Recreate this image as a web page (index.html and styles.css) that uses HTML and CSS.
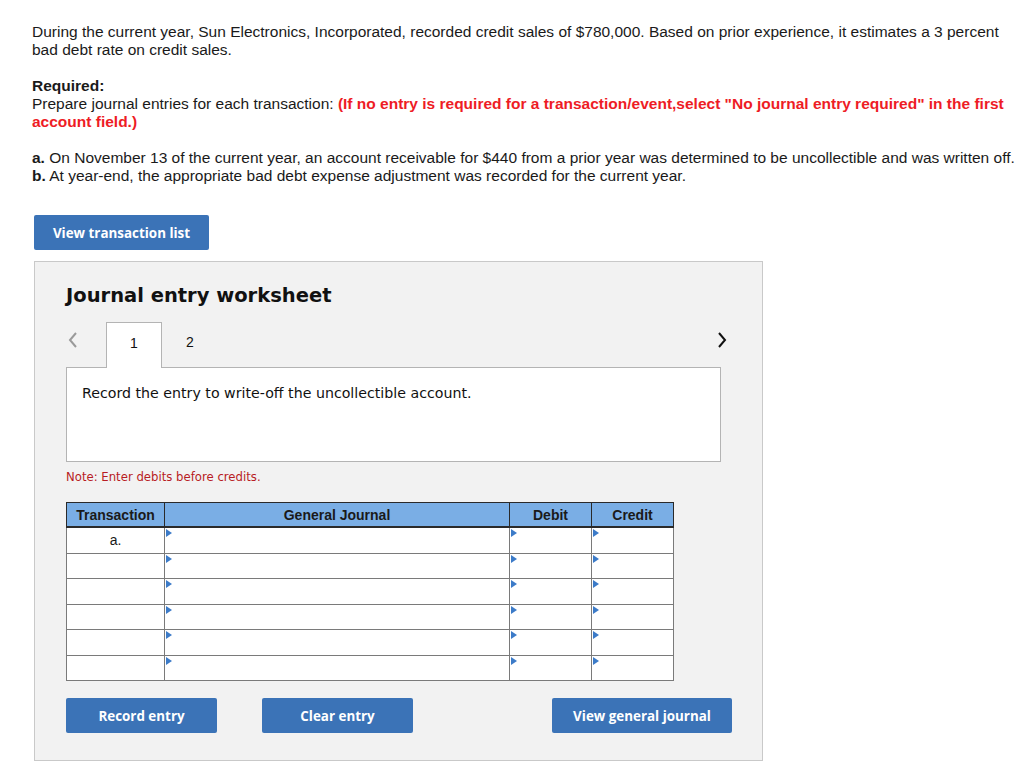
FILE: index.html
```html
<!DOCTYPE html>
<html>
<head>
<meta charset="utf-8">
<link rel="stylesheet" href="styles.css">
</head>
<body>
<div class="page">
  <p class="para">During the current year, Sun Electronics, Incorporated, recorded credit sales of $780,000. Based on prior experience, it estimates a 3 percent bad debt rate on credit sales.</p>
  <p class="para"><strong>Required:</strong><br>Prepare journal entries for each transaction: <strong class="red">(If no entry is required for a transaction/event,select "No journal entry required" in the first account field.)</strong></p>
  <p class="para para-last"><strong>a.</strong> On November 13 of the current year, an account receivable for $440 from a prior year was determined to be uncollectible and was written off.<br><strong>b.</strong> At year-end, the appropriate bad debt expense adjustment was recorded for the current year.</p>

  <button class="btn btn-list">View transaction list</button>

  <section class="panel">
    <h2 class="panel-title">Journal entry worksheet</h2>
    <div class="tabs">
      <span class="chev chev-left"><svg width="12" height="18" viewBox="0 0 12 18"><polyline points="9,2 3,9 9,16" fill="none" stroke="#9a9a9a" stroke-width="2"/></svg></span>
      <span class="tab tab-active">1</span>
      <span class="tab">2</span>
      <span class="tab-spacer"></span>
      <span class="chev chev-right"><svg width="12" height="18" viewBox="0 0 12 18"><polyline points="3,2 9,9 3,16" fill="none" stroke="#111" stroke-width="2"/></svg></span>
    </div>
    <div class="prompt">Record the entry to write-off the uncollectible account.</div>
    <div class="note">Note: Enter debits before credits.</div>
    <table class="journal">
      <thead>
        <tr><th class="c-tr">Transaction</th><th class="c-gj">General Journal</th><th class="c-dr">Debit</th><th class="c-cr">Credit</th></tr>
      </thead>
      <tbody>
        <tr><td class="c-tr">a.</td><td class="mark"></td><td class="mark"></td><td class="mark"></td></tr>
        <tr><td class="c-tr"></td><td class="mark"></td><td class="mark"></td><td class="mark"></td></tr>
        <tr><td class="c-tr"></td><td class="mark"></td><td class="mark"></td><td class="mark"></td></tr>
        <tr><td class="c-tr"></td><td class="mark"></td><td class="mark"></td><td class="mark"></td></tr>
        <tr><td class="c-tr"></td><td class="mark"></td><td class="mark"></td><td class="mark"></td></tr>
        <tr><td class="c-tr"></td><td class="mark"></td><td class="mark"></td><td class="mark"></td></tr>
      </tbody>
    </table>
    <div class="actions">
      <button class="btn btn-record">Record entry</button>
      <button class="btn btn-clear">Clear entry</button>
      <span class="actions-spacer"></span>
      <button class="btn btn-view">View general journal</button>
    </div>
  </section>
</div>
</body>
</html>
```

FILE: styles.css
```css
html, body {
  margin: 0;
  padding: 0;
  background: #ffffff;
}
.page {
  padding: 23px 0 0 32px;
  font-family: "Liberation Sans", Arial, sans-serif;
  font-size: 15.5px;
  line-height: 18px;
  color: #1a1a1a;
}
.para {
  margin: 0 0 18px 0;
  width: 990px;
}
.para-last {
  margin-bottom: 30px;
}
.red {
  color: #ee1c25;
}
.btn {
  display: block;
  border: none;
  border-radius: 2px;
  background: #3b73b7;
  color: #ffffff;
  font-family: "Open Sans", "DejaVu Sans", sans-serif;
  font-weight: 700;
  font-size: 13.4px;
  height: 35px;
  padding: 0;
  cursor: pointer;
}
.btn-list {
  margin-left: 2px;
  width: 175px;
}
.panel {
  margin: 11px 0 0 2px;
  width: 729px;
  box-sizing: border-box;
  background: #f2f2f2;
  border: 1px solid #c9c9c9;
  padding: 22px 0 27px 31px;
}
.panel-title {
  margin: 0;
  font-family: "DejaVu Sans", Verdana, sans-serif;
  font-weight: 700;
  font-size: 19.5px;
  line-height: 24px;
  color: #111;
}
.tabs {
  display: flex;
  align-items: stretch;
  margin-top: 14px;
  height: 45px;
  width: 664px;
}
.chev {
  display: flex;
  align-items: center;
  height: 36px;
}
.chev-left {
  width: 40px;
  padding-left: 1px;
  box-sizing: border-box;
}
.chev-right {
  width: 14px;
}
.tab {
  width: 56px;
  box-sizing: border-box;
  display: flex;
  justify-content: center;
  padding-top: 11px;
  font-family: "Liberation Sans", Arial, sans-serif;
  font-size: 14px;
  color: #111;
}
.tab-active {
  background: #ffffff;
  border: 1px solid #b4b4b4;
  border-bottom: none;
  position: relative;
  z-index: 1;
  height: 46px;
}
.tab-spacer {
  flex: 1;
}
.prompt {
  width: 655px;
  height: 95px;
  box-sizing: border-box;
  background: #ffffff;
  border: 1px solid #b4b4b4;
  padding: 15px 0 0 15px;
  font-family: "DejaVu Sans", Verdana, sans-serif;
  font-size: 14.2px;
  line-height: 20px;
  color: #111;
}
.note {
  margin-top: 7px;
  font-family: "DejaVu Sans", Verdana, sans-serif;
  font-size: 11.7px;
  line-height: 16px;
  color: #b81c24;
}
.journal {
  margin-top: 17px;
  border-collapse: collapse;
  table-layout: fixed;
  width: 605px;
  font-family: "Liberation Sans", Arial, sans-serif;
  font-size: 14px;
  color: #1a1a1a;
}
.journal th {
  background: #7aaee5;
  height: 23px;
  padding: 0;
  font-weight: 700;
  border: 1px solid #2a2a2a;
  border-bottom: 2px solid #2a2a2a;
  text-align: center;
}
.journal td {
  background: #ffffff;
  height: 24.5px;
  padding: 0;
  border: 1px solid #7a7a7a;
  text-align: center;
}
.c-tr { width: 97px; }
.c-gj { width: 344px; }
.c-dr { width: 81px; }
.c-cr { width: 81px; }
.mark {
  position: relative;
}
.mark::before {
  content: "";
  position: absolute;
  left: 1px;
  top: 1px;
  border-left: 6px solid #3c7bc8;
  border-top: 4px solid transparent;
  border-bottom: 4px solid transparent;
}
.actions {
  display: flex;
  margin-top: 17px;
  width: 666px;
}
.btn-record { width: 151px; }
.btn-clear { width: 151px; margin-left: 45px; }
.actions-spacer { flex: 1; }
.btn-view { width: 180px; }
```
